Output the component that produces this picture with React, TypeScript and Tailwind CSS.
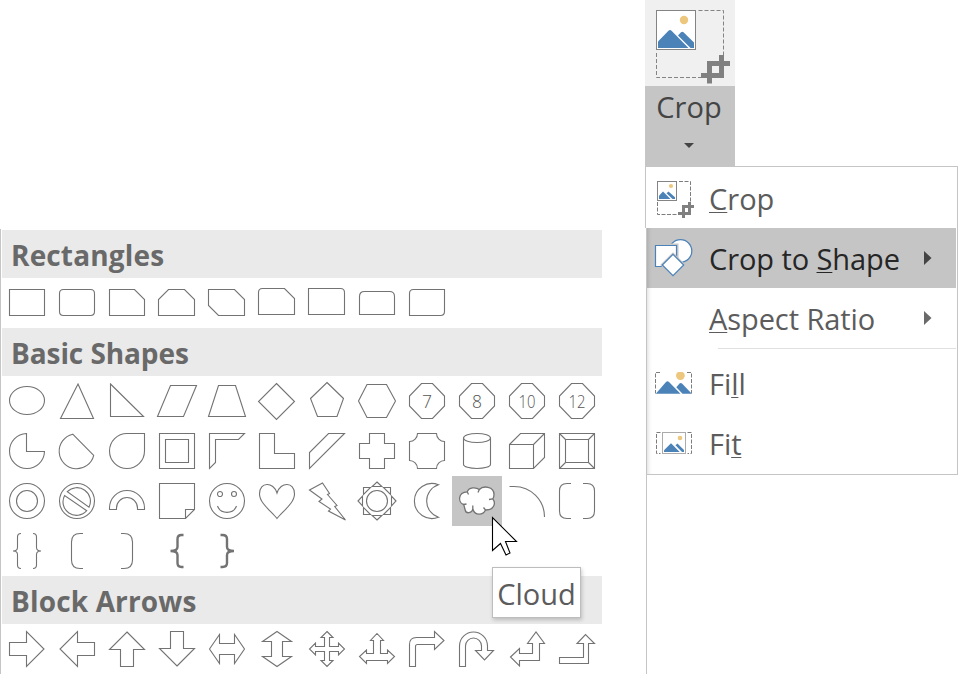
import type { ReactNode } from "react";

interface Shape {
    name: string;
    d?: string;
    label?: string;
    bold?: boolean;
    art?: ReactNode;
}

interface Section {
    title: string;
    titleClass: string;
    shapes: Shape[];
}

const OCTAGON = "M19.5 7.5H30.5L42.5 20V30L30.5 42.5H19.5L7.5 30V20Z";

// every path is drawn in a 50x50 cell
const sections: Section[] = [
    {
        title: "Rectangles",
        titleClass: "tracking-[0.15px]",
        shapes: [
            { name: "Rectangle", d: "M7.5 11.5H42.5V37.5H7.5Z" },
            { name: "Rounded", d: "M11.5 11.5H38.5Q42.5 11.5 42.5 15.5V33.5Q42.5 37.5 38.5 37.5H11.5Q7.5 37.5 7.5 33.5V15.5Q7.5 11.5 11.5 11.5Z" },
            { name: "Snip Single", d: "M7.5 11.5H32.5L42.5 21.5V37.5H7.5Z" },
            { name: "Snip Same Side", d: "M16.5 11.5H32.5L42.5 21.5V37.5H6.5V21.5Z" },
            { name: "Snip Diagonal", d: "M6.5 11.5H32.5L42.5 21.5V37.5H16.5L6.5 27.5Z" },
            { name: "Snip and Round", d: "M10.5 10.5H32.5L42.5 20.5V36.5H6.5V14.5Q6.5 10.5 10.5 10.5Z" },
            { name: "Round Single", d: "M6.5 10.5H38.5Q42.5 10.5 42.5 14.5V36.5H6.5Z" },
            { name: "Round Same Side", d: "M12.5 13.5H37.5Q42.5 13.5 42.5 18.5V36.5H7.5V18.5Q7.5 13.5 12.5 13.5Z" },
            { name: "Round Diagonal", d: "M11.5 11.5H42.5V33.5Q42.5 37.5 38.5 37.5H7.5V15.5Q7.5 11.5 11.5 11.5Z" },
        ],
    },
    {
        title: "Basic Shapes",
        titleClass: "tracking-[-0.08px]",
        shapes: [
            { name: "Oval", d: "M7.5 24.5A17.5 14 0 1 1 42.5 24.5A17.5 14 0 1 1 7.5 24.5Z" },
            { name: "Triangle", d: "M26 8L41.5 42.5H8.5Z" },
            { name: "Right Triangle", d: "M8.5 8L41.5 40.5H8.5Z" },
            { name: "Parallelogram", d: "M18.5 9.5H44.5L31.5 40.5H5.5Z" },
            { name: "Trapezoid", d: "M16.5 9.5H33.5L43.5 40.5H6.5Z" },
            { name: "Diamond", d: "M24.5 7.5L42.5 25.5L24.5 43.5L6.5 25.5Z" },
            { name: "Pentagon", d: "M25 6.5L41.5 22.5L35 40.5H15.5L8.5 22.5Z" },
            { name: "Hexagon", d: "M15 8.5H34.5L43.5 25L34.5 41.5H15L6.5 25Z" },
            { name: "Heptagon", d: OCTAGON, label: "7" },
            { name: "Octagon", d: OCTAGON, label: "8" },
            { name: "Decagon", d: OCTAGON, label: "10" },
            { name: "Dodecagon", d: OCTAGON, label: "12" },

            { name: "Partial Circle", d: "M24.5 7.5A17.5 17.5 0 1 0 42.5 25.5H24.5Z" },
            { name: "Chord", d: "M20.7 8.2A17.5 17.5 0 1 0 41.7 29.3Z" },
            { name: "Teardrop", d: "M25 7.5H42.5V25A17.5 17.5 0 1 1 25 7.5Z" },
            { name: "Frame", d: "M7.5 7.5H42.5V42.5H7.5ZM13.5 13.5H36.5V36.5H13.5Z" },
            { name: "Half Frame", d: "M7.5 7.5H42.5L36.5 13.5H13.5V36.5L7.5 42.5Z" },
            { name: "L-Shape", d: "M7.5 7.5H22.5V27.5H42.5V42.5H7.5Z" },
            { name: "Diagonal Stripe", d: "M26.5 7.5H42.5L7.5 42.5V26.5Z" },
            { name: "Cross", d: "M17.5 7.5H32.5V17.5H42.5V32.5H32.5V42.5H17.5V32.5H7.5V17.5H17.5Z" },
            { name: "Plaque", d: "M15.5 7.5H34.5A8 8 0 0 0 42.5 15.5V34.5A8 8 0 0 0 34.5 42.5H15.5A8 8 0 0 0 7.5 34.5V15.5A8 8 0 0 0 15.5 7.5Z" },
            { name: "Can", d: "M11.5 12A13.5 4.5 0 0 1 38.5 12V38.5A13.5 4 0 0 1 11.5 38.5ZM11.5 12A13.5 4.5 0 0 0 38.5 12" },
            { name: "Cube", d: "M7.5 18.5L18.5 7.5H42.5V31.5L31.5 42.5H7.5ZM7.5 18.5H31.5V42.5M31.5 18.5L42.5 7.5" },
            { name: "Bevel", d: "M7.5 7.5H42.5V42.5H7.5ZM13.5 13.5H36.5V36.5H13.5ZM7.5 7.5L13.5 13.5M42.5 7.5L36.5 13.5M42.5 42.5L36.5 36.5M7.5 42.5L13.5 36.5" },

            { name: "Donut", d: "M7.5 25A17.5 17.5 0 1 1 42.5 25A17.5 17.5 0 1 1 7.5 25ZM14.5 25A10.5 10.5 0 1 1 35.5 25A10.5 10.5 0 1 1 14.5 25Z" },
            { name: "No Symbol", d: "M7.5 25A17.5 17.5 0 1 1 42.5 25A17.5 17.5 0 1 1 7.5 25ZM15.3 15.7A13.5 13.5 0 0 1 37 31.2ZM12.6 19.5A13.5 13.5 0 0 0 34.7 34.7Z" },
            { name: "Block Arc", d: "M7.5 33.5V32A17.5 17.5 0 0 1 42.5 32V33.5H35.5V32A10.5 10.5 0 0 0 14.5 32V33.5Z" },
            { name: "Folded Corner", d: "M7.5 7.5H42.5V33.5L33.5 42.5H7.5ZM33.5 42.5V33.5H42.5" },
            { name: "Smiley Face", d: "M7.5 25A17.5 17.5 0 1 1 42.5 25A17.5 17.5 0 1 1 7.5 25ZM15.5 18A2.5 2.5 0 1 1 20.5 18A2.5 2.5 0 1 1 15.5 18ZM29.5 18A2.5 2.5 0 1 1 34.5 18A2.5 2.5 0 1 1 29.5 18ZM15.5 30C18.5 38.5 31.5 38.5 34.5 30" },
            { name: "Heart", d: "M25 17C21.5 5.5 7.5 5.5 7.5 18C7.5 27 19 35 25 42.5C31 35 42.5 27 42.5 18C42.5 5.5 28.5 5.5 25 17Z" },
            { name: "Lightning Bolt", d: "M7.5 14L20.5 7L27.5 17.5L25.5 18.5L35 29.5L32.7 30.5L43.5 44L26.5 35L28.5 33L17 25.5L20 23Z" },
            { name: "Sun", d: "M14.5 25A10.5 10.5 0 1 1 35.5 25A10.5 10.5 0 1 1 14.5 25ZM25 6L29.8 10.5H20.2ZM25 44L29.8 39.5H20.2ZM6 25L10.5 20.2V29.8ZM44 25L39.5 20.2V29.8ZM11.5 11.5H18.5L11.5 18.5ZM38.5 11.5H31.5L38.5 18.5ZM11.5 38.5H18.5L11.5 31.5ZM38.5 38.5H31.5L38.5 31.5Z" },
            { name: "Moon", d: "M36.5 8.8A17.5 17.5 0 1 0 36.5 41.2A17 17 0 0 1 36.5 8.8Z" },
            {
                name: "Cloud",
                art: (
                    <g strokeWidth="1.3">
                        <path fill="#fff" d="M15.2 15.8C17 11 24 11 27.3 13.5C31 9.5 42 10 42 18.5Q42 21 40.8 22.8C44 27 42.5 34 33.5 34C31 39.5 23 40 20.8 33C20 37.5 14 38 13.2 34L11.7 28.5C6 27 5.5 16 15.2 15.8Z" />
                        <path d="M15.2 15.8L16.5 18.5M27.3 13.5L26 16.5M40.8 22.8L37 23.5M33.5 34L31.5 31.5M20.8 33L20.8 29.5M11.7 28.5L14.5 28" />
                    </g>
                ),
            },
            { name: "Arc", d: "M7.5 10.5H12C29 10.5 42.5 24 42.5 41" },
            { name: "Double Bracket", d: "M19 7.5H15Q7.5 7.5 7.5 15V35Q7.5 42.5 15 42.5H19M31 7.5H35Q42.5 7.5 42.5 15V35Q42.5 42.5 35 42.5H31" },

            { name: "Double Brace", d: "M19 7.5Q15.5 7.5 15.5 11V21.5Q15.5 25 11 25Q15.5 25 15.5 28.5V39Q15.5 42.5 19 42.5M31 7.5Q34.5 7.5 34.5 11V21.5Q34.5 25 39 25Q34.5 25 34.5 28.5V39Q34.5 42.5 31 42.5" },
            { name: "Left Bracket", d: "M31 7.5H28Q19.5 7.5 19.5 16V34Q19.5 42.5 28 42.5H31" },
            { name: "Right Bracket", d: "M19 7.5H22Q30.5 7.5 30.5 16V34Q30.5 42.5 22 42.5H19" },
            { name: "Left Brace", bold: true, d: "M31.5 9H29.5Q25.5 9 25.5 13V21Q25.5 25 18.5 25Q25.5 25 25.5 29V37Q25.5 41 29.5 41H31.5" },
            { name: "Right Brace", bold: true, d: "M18.5 9H20.5Q25 9 25 13V21Q25 25 32 25Q25 25 25 29V37Q25 41 20.5 41H18.5" },
        ],
    },
    {
        title: "Block Arrows",
        titleClass: "tracking-[0.15px]",
        shapes: [
            { name: "Right", d: "M7.5 18.5H24.5V7.5L42 25L24.5 42.5V31.5H7.5Z" },
            { name: "Left", d: "M42.5 18.5H25.5V7.5L8 25L25.5 42.5V31.5H42.5Z" },
            { name: "Up", d: "M25 8L42.5 25.5H31.5V42.5H18.5V25.5H7.5Z" },
            { name: "Down", d: "M25 42L42.5 24.5H31.5V7.5H18.5V24.5H7.5Z" },
            { name: "Left-Right", d: "M7.5 25L17.5 10.5V19.5H32.5V10.5L42.5 25L32.5 39.5V30.5H17.5V39.5Z" },
            { name: "Up-Down", d: "M25 7.5L39.5 17.5H30.5V32.5H39.5L25 42.5L10.5 32.5H19.5V17.5H10.5Z" },
            { name: "Quad", d: "M25 7.5L31 13.5H27.5V22.5H36.5V19L42.5 25L36.5 31V27.5H27.5V36.5H31L25 42.5L19 36.5H22.5V27.5H13.5V31L7.5 25L13.5 19V22.5H22.5V13.5H19Z" },
            { name: "Left-Right-Up", d: "M25 9.5L31.5 16.5H28.5V29.5H35.5V26L42.5 32.5L35.5 39.5V36.5H14.5V39.5L7.5 32.5L14.5 26V29.5H21.5V16.5H18.5Z" },
            { name: "Bent", d: "M7.5 42.5V20.5Q7.5 13.5 14.5 13.5H32.5V7.5L42 16.5L32.5 25.5V20.5H15.5Q13.5 20.5 13.5 22.5V42.5Z" },
            { name: "U-Turn", d: "M7.5 42.5V22A14 14 0 0 1 35.5 22V26.5H41.5L32.5 36L23.5 26.5H29.5V22A8 8 0 0 0 13.5 22V42.5Z" },
            { name: "Left-Up", d: "M8.5 33L17.5 24.5V29.5H30.5V19.5H25.5L34 8L42.5 19.5H37.5V36.5H17.5V42Z" },
            { name: "Bent-Up", d: "M7.5 33.5H31.5V19.5H25L33.5 10.5L42.5 19.5H36.5V39.5H7.5Z" },
        ],
    },
];

function ShapeCell({ shape }: { shape: Shape }) {
    return (
        <div className={shape.name === "Cloud" ? "h-[50px] w-[50px] bg-[#c5c5c5]" : "h-[50px] w-[50px]"}>
            <svg width="50" height="50" viewBox="0 0 50 50" fill="none" stroke="#737373" strokeWidth={shape.bold ? 2.4 : 1.1}>
                {shape.d && <path d={shape.d} />}
                {shape.art}
                {shape.label && (
                    <text
                        x="25"
                        y="32"
                        textAnchor="middle"
                        fontSize="19"
                        fontWeight="300"
                        fill="#555"
                        stroke="none"
                        textLength={shape.label.length > 1 ? 17 : 10}
                        lengthAdjust="spacingAndGlyphs"
                    >
                        {shape.label}
                    </text>
                )}
            </svg>
        </div>
    );
}

function ShapeGallery() {
    return (
        <div className="mt-[229px] w-[602px] shrink-0 border-l border-[#c5c5c5] pt-px pl-px">
            {sections.map((section) => (
                <section key={section.title}>
                    <h2 className="flex h-12 items-center bg-[#eaeaea] pt-px pl-[9px] text-[28px] leading-none font-bold text-[#696969]">
                        <span className={section.titleClass}>{section.title}</span>
                    </h2>
                    <div className="grid grid-cols-[repeat(12,50px)]">
                        {section.shapes.map((shape) => (
                            <ShapeCell key={shape.name} shape={shape} />
                        ))}
                    </div>
                </section>
            ))}
        </div>
    );
}

function CropButton() {
    return (
        <div className="w-[90px]">
            <div className="h-[86px] bg-[#f0f0f0]">
                <svg width="90" height="86" fill="none">
                    <path d="M53.5 10.5H78.5V55M11.5 53V77.5H56" stroke="#848484" strokeDasharray="4 2" />
                    <rect x="11.5" y="10.5" width="39" height="39" fill="#fff" stroke="#848484" />
                    <path d="M13 48V41.5L23.5 30.8Q25 29.4 26.5 30.8L43.5 48Z" fill="#4b82b8" />
                    <path d="M33 35.5L36 32.2Q37.2 31.2 38.5 32.2L49 42.5V48H45.5Z" fill="#4b82b8" />
                    <circle cx="39" cy="20" r="4.2" fill="#eec77f" />
                    <path d="M64.5 61V83.5M62 63.5H85M76.5 55V78M56 75.5H79" stroke="#808080" strokeWidth="5" />
                </svg>
            </div>
            <div className="flex h-20 flex-col items-center bg-[#c5c5c5] pt-[5px] text-[29px] leading-[32px] text-[#444]">
                <span className="-ml-0.5">Crop</span>
                <svg className="mt-5 -ml-0.5" width="10" height="5">
                    <path d="M0 0H10L5 5Z" fill="#444" />
                </svg>
            </div>
        </div>
    );
}

function CropIcon() {
    return (
        <svg width="52" height="60" fill="none">
            <path d="M33 13.5H44.5V34M11.5 34V46.5H32" stroke="#7d7d7d" strokeDasharray="4 1.5" />
            <rect x="11.5" y="13.5" width="19" height="19" fill="#fff" stroke="#848484" />
            <path d="M13 31V27.8L17 23.5L24.5 31Z" fill="#4b82b8" />
            <path d="M20.5 25.2L22.5 23.5L29 29.2V31H26.5Z" fill="#4b82b8" />
            <circle cx="25" cy="18" r="2.1" fill="#eec77f" />
            <path d="M37.5 37V50M36 38.5H48M43.5 34V47M32 45.5H45" stroke="#808080" strokeWidth="3" />
        </svg>
    );
}

function ShapeIcon() {
    return (
        <svg width="51" height="60" viewBox="1 0 51 60" fill="#fff" stroke="#4b82b8" strokeWidth="1.2">
            <circle cx="34.5" cy="23" r="11.3" />
            <path d="M9.5 17.5H30.5V38.5H9.5Z" stroke="#c5c5c5" strokeWidth="4" />
            <path d="M9.5 17.5H30.5V38.5H9.5Z" />
            <path d="M27 26.3L37.7 37L27 47.7L16.3 37Z" stroke="#c5c5c5" strokeWidth="3" />
            <path d="M27 26.3L37.7 37L27 47.7L16.3 37Z" />
        </svg>
    );
}

function FillIcon() {
    return (
        <svg width="51" height="60" viewBox="1 0 51 60" fill="none">
            <path d="M9.8 39.8L20 28Q21.5 26.5 23 28L34.5 39.8Z" fill="#4b82b8" />
            <path d="M30.3 33.2L33.5 29.6Q34.8 28.4 36 29.6L45.8 39.8H36.5Z" fill="#4b82b8" />
            <path d="M32 18H36.8A4.4 4.4 0 1 1 32 18Z" fill="#eec77f" />
            <path d="M14 18.5H9.5V39.5M41 18.5H45.5V39.5" stroke="#7d7d7d" strokeDasharray="4 1.5" />
        </svg>
    );
}

function FitIcon() {
    return (
        <svg width="51" height="60" viewBox="1 0 51 60" fill="none">
            <path d="M14.5 18.5H10.5V39.5H14.5M41.5 18.5H45.5V39.5H41.5" stroke="#7d7d7d" strokeDasharray="4 1.5" />
            <rect x="16.5" y="18.5" width="23" height="21" fill="#fff" stroke="#ababab" />
            <path d="M18 38V36.3L25 29.3L33.7 38Z" fill="#4b82b8" />
            <path d="M29.5 31.3L31.4 29.6L38 36V38H36Z" fill="#4b82b8" />
            <circle cx="34" cy="24" r="2.3" fill="#eec77f" />
        </svg>
    );
}

function Key({ children }: { children: ReactNode }) {
    return <span className="underline decoration-1 underline-offset-2">{children}</span>;
}

interface MenuRowProps {
    icon?: ReactNode;
    active?: boolean;
    arrow?: boolean;
    children: ReactNode;
}

function MenuRow({ icon, active, arrow, children }: MenuRowProps) {
    return (
        <div
            className={
                active
                    ? "flex h-[60px] items-center bg-[#c5c5c5] pr-7 text-[#262626] shadow-[inset_5px_0_4px_-4px_rgba(0,0,0,0.15)]"
                    : "flex h-[60px] items-center pr-7 text-[#5c5c5c] shadow-[inset_5px_0_4px_-4px_rgba(0,0,0,0.15)]"
            }
        >
            <div className="w-[51px]">{icon}</div>
            <span className={icon && !active ? "grow pb-0.5 pl-[11px] text-[29px] leading-none tracking-[-0.08px] whitespace-pre" : "grow pl-[11px] text-[29px] leading-none tracking-[-0.08px] whitespace-pre"}>
                {children}
            </span>
            {arrow && (
                <svg className="-mr-[18px] w-[22px]" height="14">
                    <path d="M0 0V14L7.5 7Z" fill={active ? "#444" : "#6a6a6a"} />
                </svg>
            )}
        </div>
    );
}

function CropMenu() {
    return (
        <div className="flex w-[313px] grow flex-col">
            <div className="flex h-[62px] items-center border border-b-0 border-[#c5c5c5] pt-px text-[#5c5c5c]">
                <CropIcon />
                <span className="pl-[11px] text-[29px] leading-none">
                    <Key>C</Key>rop
                </span>
            </div>
            <div className="ml-px h-[247px] border border-t-0 border-[#c5c5c5] pr-px">
                <MenuRow icon={<ShapeIcon />} active arrow>
                    Crop to <Key>S</Key>hape
                </MenuRow>
                <MenuRow arrow>
                    <Key>A</Key>spect Ratio
                </MenuRow>
                <div className="pb-[5px] shadow-[inset_5px_0_4px_-4px_rgba(0,0,0,0.15)]">
                    <div className="ml-[71px] h-px bg-[#e0e0e0]" />
                </div>
                <MenuRow icon={<FillIcon />}>
                    Fi<Key>l</Key>l
                </MenuRow>
                <MenuRow icon={<FitIcon />}>
                    Fi<Key>t</Key>
                </MenuRow>
            </div>
            <div className="ml-px grow border-l border-[#c5c5c5]" />
        </div>
    );
}

export default function App() {
    return (
        <main className="relative flex h-[674px] w-[958px] justify-between overflow-hidden bg-white font-['Open_Sans','Noto_Sans',sans-serif]">
            <ShapeGallery />
            <div className="flex w-[313px] flex-col">
                <CropButton />
                <CropMenu />
            </div>

            <svg className="absolute top-[515px] left-[490px]" width="30" height="42">
                <path d="M2.5 2.5V35.5L10.5 28.5L16 40L20 38L15.5 26.5H26.5Z" fill="#fff" stroke="#000" strokeWidth="1.1" />
            </svg>
            <div className="absolute top-[567px] left-[492px] flex h-[51px] w-[89px] items-center justify-center border border-[#bdbdbd] bg-white pt-0.5 text-[29px] leading-none text-[#5c5c5c] shadow-[1px_2px_4px_rgba(0,0,0,0.2)]">
                Cloud
            </div>
        </main>
    );
}
